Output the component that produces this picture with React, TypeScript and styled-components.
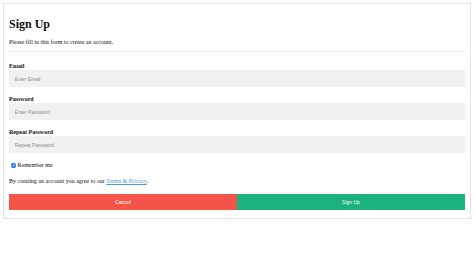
import React from "react";
import styled, { createGlobalStyle } from "styled-components";

const Global = createGlobalStyle`
  * { box-sizing: border-box; }
  html, body { background: #ffffff; }
  body {
    margin: 3px;
    font-family: "Liberation Serif", "Times New Roman", serif;
    font-size: 6px;
    line-height: 7px;
    color: #111;
    -webkit-font-smoothing: antialiased;
  }
`;

const Form = styled.form`
  border: 1px solid #e4e4e4;
`;

const Container = styled.div`
  padding: 6px 5px 8px 5px;
`;

const Title = styled.h1`
  font-size: 12px;
  line-height: 14px;
  font-weight: bold;
  margin: 7px 0 8px 0;
`;

const Text = styled.p`
  margin: 6px 0 5px 0;
`;

const Rule = styled.hr`
  border: none;
  border-top: 1px solid #eeeeee;
  margin: 3px 0 9px 0;
`;

const FieldLabel = styled.label`
  display: block;
  font-weight: bold;
  line-height: 7px;
  padding-top: 1.5px;
`;

const Field = styled.input`
  display: block;
  width: 100%;
  height: 17px;
  padding: 0 5.6px;
  margin: 0.5px 0 7px 0;
  border: none;
  background: #f1f1f1;
  font-family: "Liberation Sans", Arial, sans-serif;
  font-size: 5px;
  outline: none;
  &::placeholder { color: #8a8a8a; }
`;

const CheckLabel = styled.label`
  display: flex;
  align-items: center;
  gap: 2px;
  height: 9px;
  padding-top: 2px;
  margin: 0 0 9px 0;
`;

const Check = styled.input`
  width: 5px;
  height: 5px;
  margin: 0 0 0 1.5px;
  accent-color: #1a73e8;
`;

const Link = styled.a`
  color: #4a9ad8;
  text-decoration: underline;
`;

const Terms = styled.p`
  margin: 0 0 8.5px 0;
`;

const Actions = styled.div`
  display: flex;
`;

const Button = styled.button<{ $tone: "cancel" | "signup" }>`
  flex: 1 1 50%;
  height: 16px;
  background-color: ${(p) => (p.$tone === "cancel" ? "#f44336" : "#04AA6D")};
  color: white;
  padding: 0 7.5px;
  border: none;
  opacity: 0.9;
  font-family: "Liberation Sans", Arial, sans-serif;
  font-size: 5px;
  cursor: pointer;
`;

export default function App() {
  return (
    <>
      <Global />
      <Form onSubmit={(e) => e.preventDefault()}>
        <Container>
          <Title>Sign Up</Title>
          <Text>Please fill in this form to create an account.</Text>
          <Rule />
          <FieldLabel htmlFor="email">Email</FieldLabel>
          <Field id="email" type="text" placeholder="Enter Email" name="email" />
          <FieldLabel htmlFor="psw">Password</FieldLabel>
          <Field id="psw" type="password" placeholder="Enter Password" name="psw" />
          <FieldLabel htmlFor="psw-repeat">Repeat Password</FieldLabel>
          <Field id="psw-repeat" type="password" placeholder="Repeat Password" name="psw-repeat" />
          <CheckLabel>
            <Check type="checkbox" defaultChecked name="remember" />
            Remember me
          </CheckLabel>
          <Terms>
            By creating an account you agree to our <Link href="#">Terms &amp; Privacy</Link>.
          </Terms>
          <Actions>
            <Button type="button" $tone="cancel">Cancel</Button>
            <Button type="submit" $tone="signup">Sign Up</Button>
          </Actions>
        </Container>
      </Form>
    </>
  );
}
